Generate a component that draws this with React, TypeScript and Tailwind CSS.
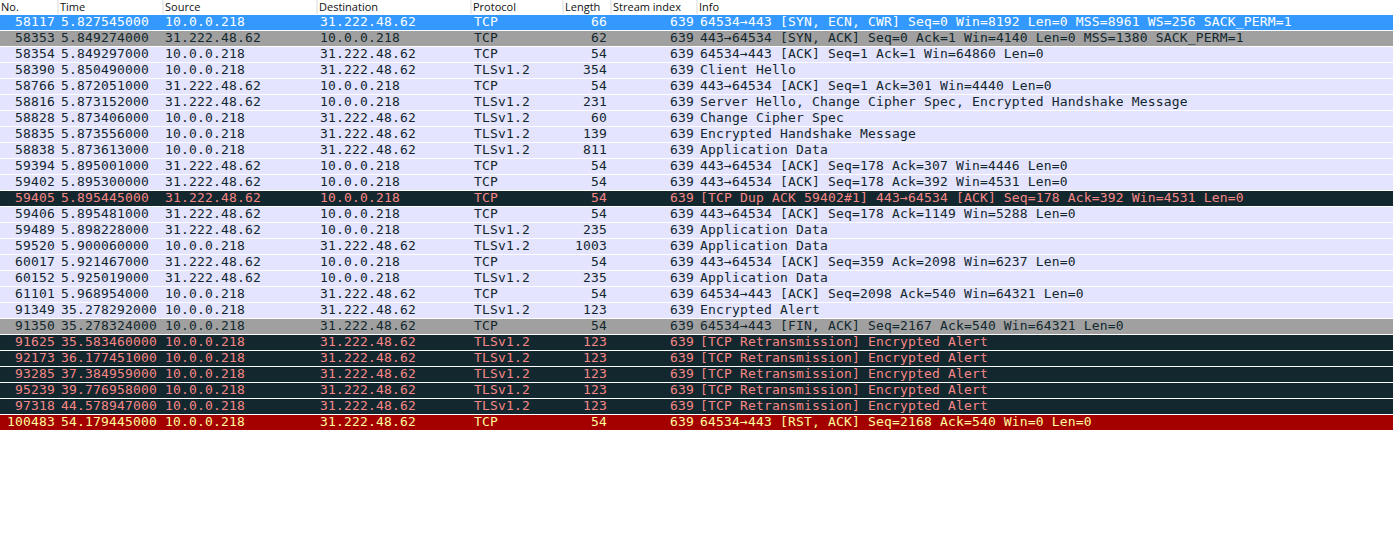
type Tone = "sel" | "gray" | "light" | "dark" | "red";

interface PacketRow {
  no: string;
  time: string;
  src: string;
  dst: string;
  proto: string;
  len: string;
  info: string;
  tone: Tone;
}

const A = "10.0.0.218";
const B = "31.222.48.62";

const rows: PacketRow[] = [
  { no: "58117", time: "5.827545000", src: A, dst: B, proto: "TCP", len: "66", info: "64534→443 [SYN, ECN, CWR] Seq=0 Win=8192 Len=0 MSS=8961 WS=256 SACK_PERM=1", tone: "sel" },
  { no: "58353", time: "5.849274000", src: B, dst: A, proto: "TCP", len: "62", info: "443→64534 [SYN, ACK] Seq=0 Ack=1 Win=4140 Len=0 MSS=1380 SACK_PERM=1", tone: "gray" },
  { no: "58354", time: "5.849297000", src: A, dst: B, proto: "TCP", len: "54", info: "64534→443 [ACK] Seq=1 Ack=1 Win=64860 Len=0", tone: "light" },
  { no: "58390", time: "5.850490000", src: A, dst: B, proto: "TLSv1.2", len: "354", info: "Client Hello", tone: "light" },
  { no: "58766", time: "5.872051000", src: B, dst: A, proto: "TCP", len: "54", info: "443→64534 [ACK] Seq=1 Ack=301 Win=4440 Len=0", tone: "light" },
  { no: "58816", time: "5.873152000", src: B, dst: A, proto: "TLSv1.2", len: "231", info: "Server Hello, Change Cipher Spec, Encrypted Handshake Message", tone: "light" },
  { no: "58828", time: "5.873406000", src: A, dst: B, proto: "TLSv1.2", len: "60", info: "Change Cipher Spec", tone: "light" },
  { no: "58835", time: "5.873556000", src: A, dst: B, proto: "TLSv1.2", len: "139", info: "Encrypted Handshake Message", tone: "light" },
  { no: "58838", time: "5.873613000", src: A, dst: B, proto: "TLSv1.2", len: "811", info: "Application Data", tone: "light" },
  { no: "59394", time: "5.895001000", src: B, dst: A, proto: "TCP", len: "54", info: "443→64534 [ACK] Seq=178 Ack=307 Win=4446 Len=0", tone: "light" },
  { no: "59402", time: "5.895300000", src: B, dst: A, proto: "TCP", len: "54", info: "443→64534 [ACK] Seq=178 Ack=392 Win=4531 Len=0", tone: "light" },
  { no: "59405", time: "5.895445000", src: B, dst: A, proto: "TCP", len: "54", info: "[TCP Dup ACK 59402#1] 443→64534 [ACK] Seq=178 Ack=392 Win=4531 Len=0", tone: "dark" },
  { no: "59406", time: "5.895481000", src: B, dst: A, proto: "TCP", len: "54", info: "443→64534 [ACK] Seq=178 Ack=1149 Win=5288 Len=0", tone: "light" },
  { no: "59489", time: "5.898228000", src: B, dst: A, proto: "TLSv1.2", len: "235", info: "Application Data", tone: "light" },
  { no: "59520", time: "5.900060000", src: A, dst: B, proto: "TLSv1.2", len: "1003", info: "Application Data", tone: "light" },
  { no: "60017", time: "5.921467000", src: B, dst: A, proto: "TCP", len: "54", info: "443→64534 [ACK] Seq=359 Ack=2098 Win=6237 Len=0", tone: "light" },
  { no: "60152", time: "5.925019000", src: B, dst: A, proto: "TLSv1.2", len: "235", info: "Application Data", tone: "light" },
  { no: "61101", time: "5.968954000", src: A, dst: B, proto: "TCP", len: "54", info: "64534→443 [ACK] Seq=2098 Ack=540 Win=64321 Len=0", tone: "light" },
  { no: "91349", time: "35.278292000", src: A, dst: B, proto: "TLSv1.2", len: "123", info: "Encrypted Alert", tone: "light" },
  { no: "91350", time: "35.278324000", src: A, dst: B, proto: "TCP", len: "54", info: "64534→443 [FIN, ACK] Seq=2167 Ack=540 Win=64321 Len=0", tone: "gray" },
  { no: "91625", time: "35.583460000", src: A, dst: B, proto: "TLSv1.2", len: "123", info: "[TCP Retransmission] Encrypted Alert", tone: "dark" },
  { no: "92173", time: "36.177451000", src: A, dst: B, proto: "TLSv1.2", len: "123", info: "[TCP Retransmission] Encrypted Alert", tone: "dark" },
  { no: "93285", time: "37.384959000", src: A, dst: B, proto: "TLSv1.2", len: "123", info: "[TCP Retransmission] Encrypted Alert", tone: "dark" },
  { no: "95239", time: "39.776958000", src: A, dst: B, proto: "TLSv1.2", len: "123", info: "[TCP Retransmission] Encrypted Alert", tone: "dark" },
  { no: "97318", time: "44.578947000", src: A, dst: B, proto: "TLSv1.2", len: "123", info: "[TCP Retransmission] Encrypted Alert", tone: "dark" },
  { no: "100483", time: "54.179445000", src: A, dst: B, proto: "TCP", len: "54", info: "64534→443 [RST, ACK] Seq=2168 Ack=540 Win=0 Len=0", tone: "red" },
];

const toneClass: Record<Tone, string> = {
  sel: "bg-[#3399ff] text-white",
  gray: "bg-[#a0a0a0] text-[#12272e]",
  light: "bg-[#e4e4ff] text-[#12272e]",
  dark: "bg-[#12272e] text-[#f78787]",
  red: "bg-[#a40000] text-[#fffc9c]",
};

const headers = [
  { label: "No.", cls: "w-[57px] pl-[1px]" },
  { label: "Time", cls: "w-[105px] border-l-2 border-[#ececec] pl-[1px]" },
  { label: "Source", cls: "w-[154px] border-l-2 border-[#ececec] pl-[1px]" },
  { label: "Destination", cls: "w-[154px] border-l-2 border-[#ececec] pl-[1px]" },
  { label: "Protocol", cls: "w-[92px] border-l-2 border-[#ececec] pl-[1px]" },
  { label: "Length", cls: "w-[48px] border-l-2 border-[#ececec] pl-[1px]" },
  { label: "Stream index", cls: "w-[86px] border-l-2 border-[#ececec] pl-[1px]" },
  { label: "Info", cls: "flex-1 border-l-2 border-[#ececec] pl-[1px]" },
];

export default function App() {
  return (
    <div className="w-[1393px] h-[540px] bg-white overflow-hidden">
      <div className="flex h-[14px] bg-white font-['Open_Sans','Liberation_Sans',sans-serif] text-[11px] leading-[14px] text-[#111]">
        {headers.map((h) => (
          <div key={h.label} className={`${h.cls} whitespace-nowrap overflow-hidden`}>
            {h.label}
          </div>
        ))}
      </div>
      <div className="flex flex-col pt-[1px] font-['DejaVu_Sans_Mono',monospace] text-[13px] tracking-[0.17px] leading-[13px]">
        {rows.map((r) => (
          <div key={r.no} className={`flex h-[15px] mb-[1px] whitespace-pre ${toneClass[r.tone]}`}>
            <div className="w-[57px] pr-[2px] text-right">{r.no}</div>
            <div className="w-[105px] pl-[4px]">{r.time}</div>
            <div className="w-[154px] pl-[3px]">{r.src}</div>
            <div className="w-[154px] pl-[4px]">{r.dst}</div>
            <div className="w-[92px] pl-[4px]">{r.proto}</div>
            <div className="w-[49px] pr-[4px] text-right">{r.len}</div>
            <div className="w-[84px] pr-[1px] text-right">639</div>
            <div className="flex-1 pl-[5px]">{r.info}</div>
          </div>
        ))}
      </div>
    </div>
  );
}
